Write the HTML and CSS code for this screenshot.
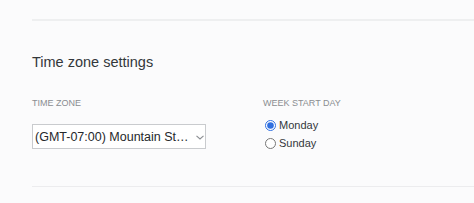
FILE: index.html
```html
<!DOCTYPE html>
<html lang="en">

<head>
    <meta charset="UTF-8">
    <meta name="viewport" content="width=device-width, initial-scale=1.0">
    <title>Time zone settings</title>
    <link rel="stylesheet" href="styles.css">
</head>

<body>
    <div class="page">
        <section class="settings">
            <h2 class="title">Time zone settings</h2>
            <div class="fields">
                <div class="field">
                    <p class="label">Time zone</p>
                    <div class="select-wrap">
                        <select class="tz">
                            <option>(GMT-07:00) Mountain Standard Time</option>
                        </select>
                        <!--下拉箭头-->
                        <svg class="chevron" width="8" height="5" viewBox="0 0 8 5">
                            <path d="M0.5 0.8 L4 4 L7.5 0.8" fill="none" stroke="#8b8e92" stroke-width="1.1"/>
                        </svg>
                    </div>
                </div>
                <div class="field">
                    <p class="label">Week start day</p>
                    <label class="radio"><input type="radio" name="week" checked> Monday</label>
                    <label class="radio"><input type="radio" name="week"> Sunday</label>
                </div>
            </div>
        </section>
    </div>
</body>

</html>
```

FILE: styles.css
```css
/*
    基本样式
*/
body,
h2,
p {
    margin: 0;
    padding: 0;
}

body {
    background-color: #fbfbfc;
    font-family: "Liberation Sans", Arial, sans-serif;
    color: #2b2f33;
}

.page {
    padding: 19px 0 0 32px;
}

/*
    设置块
*/
.settings {
    height: 168px;
    box-sizing: border-box;
    border-top: 2px solid #eeeff0;
    border-bottom: 1px solid #ececee;
}

.title {
    margin-top: 31px;
    font-size: 14.5px;
    font-weight: 400;
    line-height: 20px;
    color: #33373b;
}

.fields {
    display: grid;
    grid-template-columns: 231px 1fr;
    margin-top: 24px;
}

.label {
    font-size: 9px;
    line-height: 14px;
    text-transform: uppercase;
    color: #8a8d91;
}

/*
    下拉框
*/
.select-wrap {
    position: relative;
    width: 174px;
    margin-top: 14px;
}

.tz {
    display: block;
    width: 174px;
    height: 25px;
    padding: 0 13px 0 2px;
    border: 1px solid #c9cbce;
    border-radius: 0;
    background-color: #fff;
    appearance: none;
    font-family: "Liberation Sans", Arial, sans-serif;
    font-size: 12.5px;
    color: #25282b;
    text-overflow: ellipsis;
    white-space: nowrap;
    overflow: hidden;
}

.chevron {
    position: absolute;
    top: 11px;
    left: 164px;
    pointer-events: none;
}

/*
    单选
*/
.radio {
    display: flex;
    align-items: center;
    height: 18px;
    font-size: 11px;
    color: #33373b;
}

.radio:first-of-type {
    margin-top: 6px;
}

.radio input {
    width: 11px;
    height: 11px;
    margin: 0 3px 0 2px;
    accent-color: #2f6fe0;
}
```
